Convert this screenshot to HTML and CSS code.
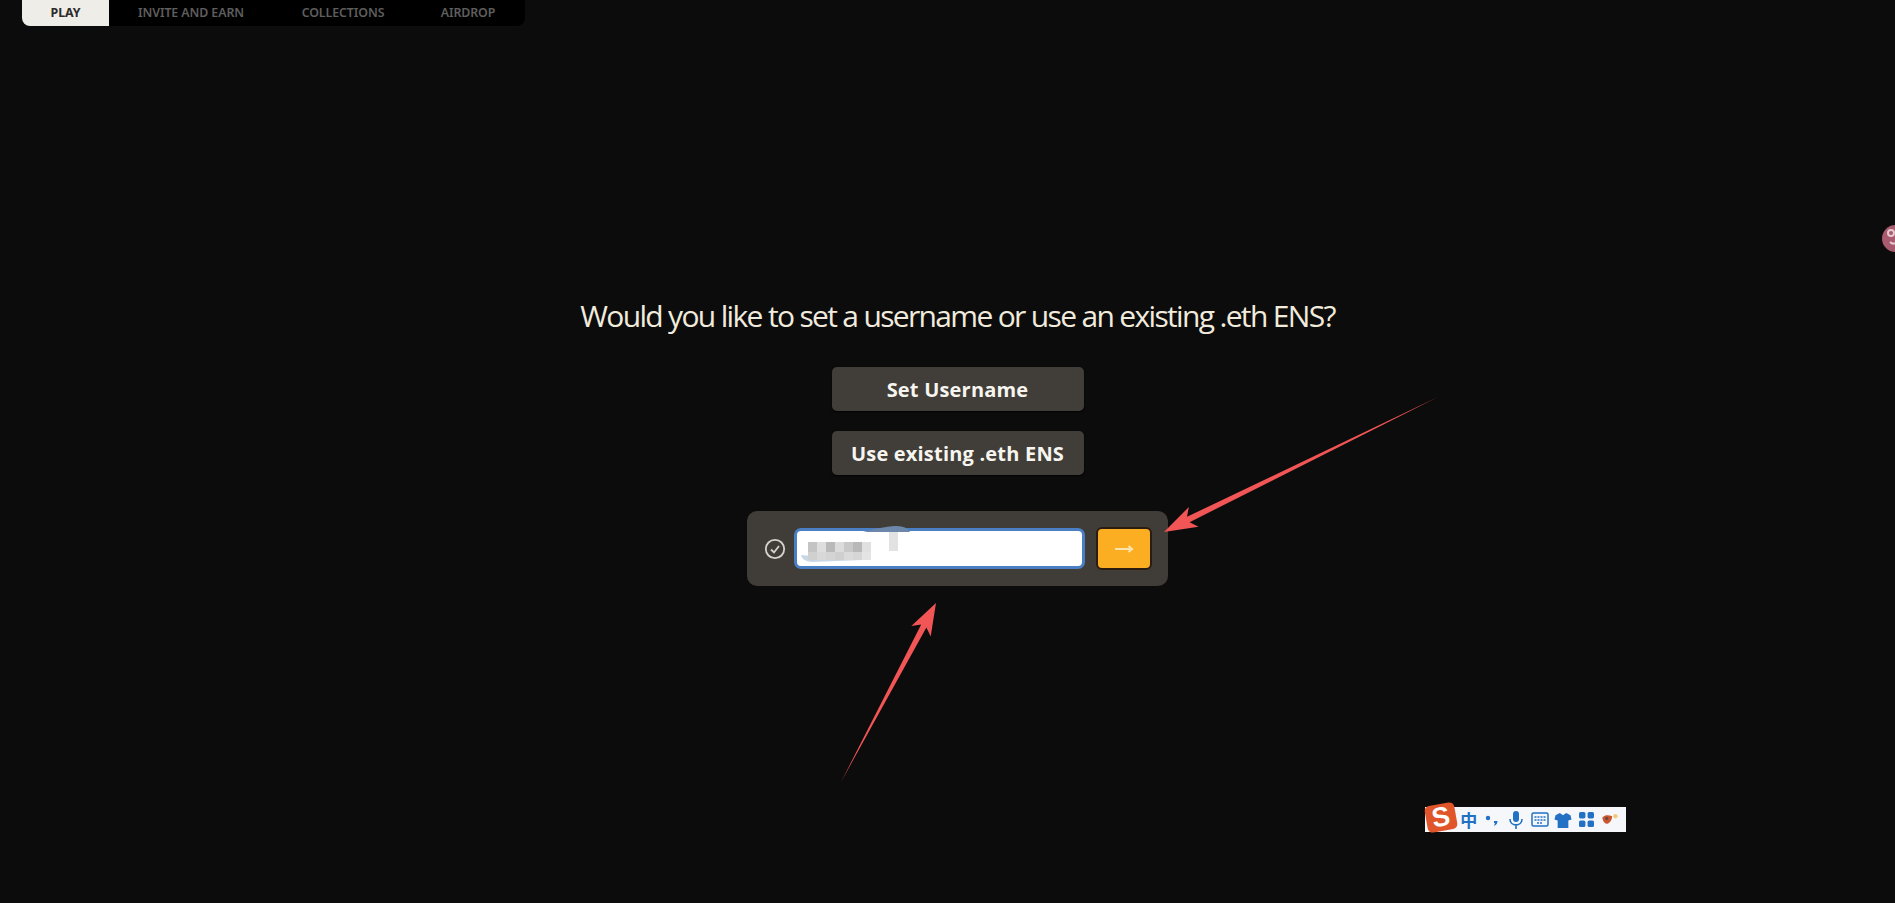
FILE: index.html
```html
<!DOCTYPE html>
<html lang="en">

<head>
    <meta charset="UTF-8" />
    <meta name="viewport" content="width=device-width, initial-scale=1.0" />
    <title>Set Username</title>
    <link rel="stylesheet" href="styles.css">
</head>

<body>
    <nav class="tabs">
        <a class="tab active" href="#">PLAY</a>
        <a class="tab invite" href="#">INVITE AND EARN</a>
        <a class="tab collections" href="#">COLLECTIONS</a>
        <a class="tab airdrop" href="#">AIRDROP</a>
    </nav>

    <main class="setup">
        <h1>Would you like to set a username or use an existing .eth ENS?</h1>
        <button class="choice">Set Username</button>
        <button class="choice">Use existing .eth ENS</button>

        <div class="name-panel">
            <svg class="check" width="22" height="22" viewBox="0 0 22 22" fill="none" stroke="#d6d3cc" stroke-width="1.8">
                <circle cx="11" cy="11" r="9.200" />
                <path d="M7 11.500l3 3 5-6.500" />
            </svg>
            <div class="name-input">
                <!-- scribbled-out name -->
                <svg class="scribble" width="130" height="50" viewBox="0 0 130 50">
                    <path d="M69 13Q88 8 100 7 112 6 116 13z" fill="#6d87ab" />
                    <path d="M6 32Q30 18 69 13L116 13 112 24 104 32 70 40 30 43 10 42Q4 38 6 32z" fill="#fff" />
                    <path d="M7 36Q8 42 18 43L68 41 30 38z" fill="#c9d6e6" />
                    <rect x="95" y="13" width="9" height="19" fill="#e2e2e2" />
                    <rect x="14" y="23" width="9" height="10" fill="#c4c4c4" />
                    <rect x="23" y="23" width="9" height="10" fill="#dedede" />
                    <rect x="32" y="23" width="9" height="10" fill="#b9b9b9" />
                    <rect x="41" y="23" width="9" height="10" fill="#dcdcdc" />
                    <rect x="50" y="23" width="9" height="10" fill="#c8c8c8" />
                    <rect x="59" y="23" width="9" height="10" fill="#b8b8b8" />
                    <rect x="68" y="23" width="9" height="10" fill="#e0e0e0" />
                    <rect x="14" y="33" width="9" height="8" fill="#d0d0d0" />
                    <rect x="23" y="33" width="9" height="8" fill="#d8d8d8" />
                    <rect x="32" y="33" width="9" height="8" fill="#d4d4d4" />
                    <rect x="41" y="33" width="9" height="8" fill="#cfcfcf" />
                    <rect x="50" y="33" width="9" height="8" fill="#dadada" />
                    <rect x="59" y="33" width="9" height="8" fill="#d6d6d6" />
                    <rect x="68" y="33" width="9" height="8" fill="#e4e4e4" />
                </svg>
            </div>
            <button class="go">
                <svg width="20" height="10" viewBox="0 0 20 10" fill="none" stroke="#fbe3ab" stroke-width="2.200">
                    <path d="M1 5h17M14.500 2l3.500 3-3.500 3" />
                </svg>
            </button>
        </div>
    </main>

    <!-- red annotation arrows -->
    <svg class="arrows" width="1895" height="903" viewBox="0 0 1895 903" fill="#f25555">
        <path d="M1438 397L1189.600 522.200 1198.500 526.800 1164 532 1188.900 507 1187 516.800z" />
        <path d="M841 782L926.400 627.400 930.700 636.500 936 603 911.300 626.100 921.200 624.600z" />
    </svg>

    <div class="chat-bubble">
        <svg width="14" height="24" viewBox="0 0 14 24" fill="none" stroke="#e6c9cf" stroke-width="2">
            <circle cx="5" cy="7" r="3" />
            <path d="M4 16c2 2 5 2 8 0" />
        </svg>
    </div>

    <div class="ime">
        <span class="ime-logo">S</span>
        <span class="ime-cell ime-char">中</span>
        <span class="ime-cell">
            <svg width="18" height="18" viewBox="0 0 18 18" fill="#2271c4">
                <circle cx="5" cy="7" r="2.200" />
                <path d="M11 10h3.500c0 2-1 4-3.500 5l1-3h-1z" />
            </svg>
        </span>
        <span class="ime-cell">
            <svg width="14" height="20" viewBox="0 0 14 20" fill="#2271c4">
                <rect x="4" y="1" width="6" height="11" rx="3" />
                <path d="M1 9c0 8 12 8 12 0M7 14v5" fill="none" stroke="#2271c4" stroke-width="1.600" />
            </svg>
        </span>
        <span class="ime-cell">
            <svg width="18" height="15" viewBox="0 0 18 15" fill="none" stroke="#2271c4" stroke-width="1.500">
                <rect x="1" y="1" width="16" height="13" rx="1.500" />
                <path d="M3.500 5h11M3.500 8h11M6 11h6" stroke-dasharray="2 1" />
            </svg>
        </span>
        <span class="ime-cell">
            <svg width="18" height="16" viewBox="0 0 16 15" fill="#2271c4">
                <path d="M5 1L1 3 0 7l3 1V15h10V8l3-1-1-4-4-2-3 2z" />
            </svg>
        </span>
        <span class="ime-cell">
            <svg width="15" height="15" viewBox="0 0 14 14" fill="#2271c4">
                <rect x="0" y="0" width="6" height="6" rx="1.500" />
                <rect x="8" y="0" width="6" height="6" rx="1.500" />
                <rect x="0" y="8" width="6" height="6" rx="1.500" />
                <rect x="8" y="8" width="6" height="6" rx="1.500" />
            </svg>
        </span>
        <span class="ime-cell">
            <svg width="18" height="13" viewBox="0 0 16 12">
                <path d="M1 4c3-3 6-2 9-1 0 4-3 7-5 7S1 7 1 4z" fill="#c9562f" />
                <circle cx="5" cy="5" r="1.500" fill="#6b4a3a" />
                <circle cx="13" cy="3" r="2" fill="#f5c878" />
            </svg>
        </span>
    </div>
</body>

</html>
```

FILE: styles.css
```css
* {
    box-sizing: border-box;
}

body {
    font-family: "Open Sans", Arial, sans-serif;
    background: #0c0c0c;
    color: #fff;
    margin: 0;
    height: 903px;
    overflow: hidden;
    position: relative;
}

.tabs {
    display: flex;
    width: 503px;
    height: 26px;
    margin-left: 22px;
    background: #000;
    border-radius: 0 0 8px 8px;
    font-family: "Noto Sans", Arial, sans-serif;
    font-size: 12.400px;
}

.tab {
    display: flex;
    align-items: center;
    justify-content: center;
    padding-bottom: 1px;
    color: #5e5e5e;
    text-decoration: none;
    font-weight: 600;
    letter-spacing: -0.1px;
}

.tab.active {
    width: 87px;
    background: #efede8;
    color: #2b2b2b;
    font-weight: 700;
    border-radius: 0 0 0 8px;
}

.invite {
    width: 164px;
}

.collections {
    width: 140px;
}

.airdrop {
    width: 110px;
}

.setup {
    display: flex;
    flex-direction: column;
    align-items: center;
    padding-top: 265px;
    padding-left: 20px;
}

.setup h1 {
    margin: 0 0 26px;
    font-size: 30px;
    line-height: 50px;
    font-weight: 400;
    letter-spacing: -1.670px;
    color: #f1ebdd;
    white-space: nowrap;
}

.choice {
    width: 252px;
    height: 44px;
    margin-bottom: 20px;
    background: #413d38;
    border: 0;
    border-radius: 5px;
    box-shadow: 0 1px 2px rgba(0, 0, 0, 0.8);
    color: #f7f5ef;
    font-family: "Open Sans", Arial, sans-serif;
    font-size: 20px;
    font-weight: 700;
    letter-spacing: 0.2px;
}

.name-panel {
    display: flex;
    align-items: center;
    width: 421px;
    height: 75px;
    margin-top: 16px;
    padding: 0 16px 0 17px;
    background: #403d38;
    border-radius: 10px;
}

.check {
    flex-shrink: 0;
    margin-right: 8px;
}

.name-input {
    position: relative;
    width: 291px;
    height: 41px;
    background: #fff;
    border: 3px solid #4a7fc4;
    border-radius: 7px;
}

.scribble {
    position: absolute;
    left: -3px;
    top: -12px;
}

.go {
    display: flex;
    align-items: center;
    justify-content: center;
    width: 56px;
    height: 43px;
    margin-left: 11px;
    padding: 0;
    background: #fbae22;
    border: 2px solid #2b1c10;
    border-radius: 6px;
}

.arrows {
    position: absolute;
    left: 0;
    top: 0;
    pointer-events: none;
}

.chat-bubble {
    position: absolute;
    left: 1882px;
    top: 225px;
    width: 27px;
    height: 27px;
    padding: 1px 0 0 4px;
    background: #a85a6e;
    border-radius: 50%;
}

.ime {
    position: absolute;
    left: 1425px;
    top: 807px;
    display: flex;
    align-items: center;
    width: 201px;
    height: 25px;
    padding-left: 32px;
    background: #f5f7fa;
}

.ime-logo {
    position: absolute;
    left: 1px;
    top: -3px;
    width: 30px;
    height: 27px;
    background: #e0562a;
    border-radius: 5px;
    transform: rotate(-10deg);
    color: #fff;
    font-family: "Liberation Sans", Arial, sans-serif;
    font-size: 27px;
    font-weight: 700;
    line-height: 27px;
    text-align: center;
}

.ime-cell {
    display: flex;
    align-items: center;
    justify-content: center;
    width: 23.600px;
    height: 100%;
}

.ime-char {
    color: #2271c4;
    font-family: "Noto Sans CJK SC", sans-serif;
    font-size: 17px;
    font-weight: 700;
}
```
